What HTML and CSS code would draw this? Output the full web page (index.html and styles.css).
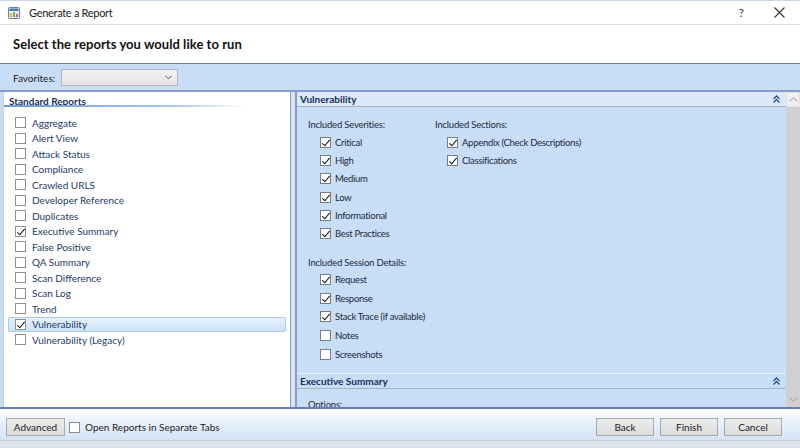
FILE: index.html
```html
<!DOCTYPE html>
<html>
<head>
<meta charset="utf-8">
<link rel="stylesheet" href="styles.css">
</head>
<body>
<div class="window">
  <div class="titlebar">
    <svg class="app-icon" width="12" height="12" viewBox="0 0 12 12">
      <rect x="0.5" y="0.5" width="11" height="11" rx="1" fill="#e8eef4" stroke="#6b7f95"/>
      <rect x="1.5" y="1.5" width="9" height="2.5" fill="#4a78b0"/>
      <rect x="2" y="6" width="2" height="4" fill="#e2b23c"/>
      <rect x="5" y="5" width="2" height="5" fill="#6fb04a"/>
      <rect x="8" y="7" width="2" height="3" fill="#d05b8c"/>
    </svg>
    <span class="title">Generate a Report</span>
    <span class="tb-help">?</span>
    <svg class="tb-close" width="11" height="11" viewBox="0 0 11 11"><path d="M0.5 0.5 L10.5 10.5 M10.5 0.5 L0.5 10.5" stroke="#333" stroke-width="1.1"/></svg>
  </div>
  <div class="header">Select the reports you would like to run</div>
  <div class="favbar">
    <span class="fav-label">Favorites:</span>
    <div class="select"><svg width="7" height="5" viewBox="0 0 7 5"><path d="M0.5 0.8 L3.5 3.8 L6.5 0.8" fill="none" stroke="#555" stroke-width="1"/></svg></div>
  </div>
  <div class="main">
    <div class="left">
      <div class="left-head">Standard Reports</div>
      <ul class="report-list">
        <li><span class="cb"></span>Aggregate</li>
        <li><span class="cb"></span>Alert View</li>
        <li><span class="cb"></span>Attack Status</li>
        <li><span class="cb"></span>Compliance</li>
        <li><span class="cb"></span>Crawled URLS</li>
        <li><span class="cb"></span>Developer Reference</li>
        <li><span class="cb"></span>Duplicates</li>
        <li><span class="cb on"></span>Executive Summary</li>
        <li><span class="cb"></span>False Positive</li>
        <li><span class="cb"></span>QA Summary</li>
        <li><span class="cb"></span>Scan Difference</li>
        <li><span class="cb"></span>Scan Log</li>
        <li><span class="cb"></span>Trend</li>
        <li class="sel"><span class="cb on"></span>Vulnerability</li>
        <li><span class="cb"></span>Vulnerability (Legacy)</li>
      </ul>
    </div>
    <div class="splitter"></div>
    <div class="right">
      <div class="right-scroll">
        <div class="sec-head">Vulnerability<svg class="collapse" width="7" height="8" viewBox="0 0 7 8"><path d="M0.5 4 L3.5 1 L6.5 4 M0.5 7.5 L3.5 4.5 L6.5 7.5" fill="none" stroke="#2a4f86" stroke-width="1.3"/></svg></div>
        <div class="sec-body">
          <div class="cols">
            <div class="col col1">
              <div class="grp-label">Included Severities:</div>
              <div class="opt"><span class="cb2 on"></span>Critical</div>
              <div class="opt"><span class="cb2 on"></span>High</div>
              <div class="opt"><span class="cb2 on"></span>Medium</div>
              <div class="opt"><span class="cb2 on"></span>Low</div>
              <div class="opt"><span class="cb2 on"></span>Informational</div>
              <div class="opt"><span class="cb2 on"></span>Best Practices</div>
            </div>
            <div class="col">
              <div class="grp-label">Included Sections:</div>
              <div class="opt"><span class="cb2 on"></span>Appendix (Check Descriptions)</div>
              <div class="opt"><span class="cb2 on"></span>Classifications</div>
            </div>
          </div>
          <div class="grp-label grp2">Included Session Details:</div>
          <div class="opt"><span class="cb2 on"></span>Request</div>
          <div class="opt"><span class="cb2 on"></span>Response</div>
          <div class="opt"><span class="cb2 on"></span>Stack Trace (if available)</div>
          <div class="opt tall"><span class="cb2"></span>Notes</div>
          <div class="opt tall"><span class="cb2"></span>Screenshots</div>
        </div>
        <div class="sec-head sec2">Executive Summary<svg class="collapse" width="7" height="8" viewBox="0 0 7 8"><path d="M0.5 4 L3.5 1 L6.5 4 M0.5 7.5 L3.5 4.5 L6.5 7.5" fill="none" stroke="#2a4f86" stroke-width="1.3"/></svg></div>
        <div class="sec-body2"><div class="grp-label">Options:</div></div>
      </div>
      <div class="vscroll">
        <div class="sb-btn"><svg width="9" height="5" viewBox="0 0 9 5"><path d="M0.5 4.5 L4.5 0.8 L8.5 4.5" fill="none" stroke="#9a9a9a" stroke-width="1"/></svg></div>
        <div class="sb-track"></div>
        <div class="sb-btn down"><svg width="9" height="5" viewBox="0 0 9 5"><path d="M0.5 0.5 L4.5 4.2 L8.5 0.5" fill="none" stroke="#9a9a9a" stroke-width="1"/></svg></div>
      </div>
    </div>
  </div>
  <div class="footer">
    <button class="btn adv">Advanced</button>
    <span class="cb foot-cb"></span>
    <span class="foot-label">Open Reports in Separate Tabs</span>
    <span class="spacer"></span>
    <button class="btn">Back</button>
    <button class="btn">Finish</button>
    <button class="btn">Cancel</button>
  </div>
  <div class="statusbar"></div>
</div>
</body>
</html>
```
FILE: styles.css
```css
* { box-sizing: border-box; }
html, body { margin: 0; padding: 0; }
body {
  width: 800px; height: 448px; overflow: hidden;
  font-family: Lato, "Noto Sans", sans-serif;
  background: #fff;
}
.window { width: 800px; height: 448px; display: flex; flex-direction: column; }

.titlebar {
  height: 25px; flex: none; display: flex; align-items: center;
  padding-left: 8px; border-bottom: 1px solid #dcdcdc; background: #fff;
  border-top: 1px solid #c9d6e6;
}
.app-icon { flex: none; }
.title { margin-left: 9px; font-size: 11px; color: #222; letter-spacing: -0.3px; }
.tb-help { margin-left: auto; font-size: 11.5px; color: #333; margin-right: 30px; }
.tb-close { margin-right: 15px; }

.header {
  height: 39px; flex: none; padding: 11px 0 0 13px;
  font-size: 13px; font-weight: 700; color: #111; letter-spacing: 0.05px;
  border-bottom: 1px solid #6d7ea6; background: #fff;
}

.favbar {
  height: 28px; flex: none; background: #c8ddf6; display: flex; align-items: center;
  padding-left: 13px; border-bottom: 2px solid #8a9acb; padding-top: 1px;
}
.fav-label { font-size: 10px; color: #222; }
.select {
  margin-left: 6px; width: 117px; height: 17px; border: 1px solid #b5b5b5;
  background: linear-gradient(#f2f2f2, #e4e4e4); display: flex; align-items: center;
  justify-content: flex-end; padding-right: 5px;
}

.main { height: 315px; flex: none; display: flex; padding-left: 3px; background: #c8ddf6; overflow: hidden; }

.left {
  width: 288px; flex: none; background: #fff; border-right: 1px solid #8f9bb3;
  border-left: 1px solid #c6cfdc; overflow: hidden;
}
.left-head {
  font-size: 10px; font-weight: 700; color: #15305b; padding: 3px 0 0 5px;
  position: relative; height: 14px; line-height: 12px;
}
.left-head::after {
  content: ""; position: absolute; left: 0; bottom: -1px; width: 240px; height: 2px;
  background: linear-gradient(to right, #6e98d8, #a9c4ec 70%, rgba(255,255,255,0));
}
.report-list { list-style: none; margin: 9px 0 0; padding: 0 4px 0 4px; }
.report-list li {
  height: 15.5px; display: flex; align-items: center; font-size: 10px; color: #233a6a;
  padding-left: 6px; border: 1px solid transparent; border-radius: 2px;
}
.report-list li.sel {
  background: linear-gradient(#e6f1fc, #cde3f8); border-color: #a8cbef;
}
.cb {
  width: 11px; height: 11px; border: 1px solid #8e8f8f; background: #fff; flex: none;
  margin-right: 6px; position: relative;
}
.cb.on::after, .cb2.on::after {
  content: ""; position: absolute; left: 3px; top: 0px; width: 3px; height: 7px;
  border: solid #111; border-width: 0 1.6px 1.6px 0; transform: rotate(40deg);
}

.splitter {
  width: 6px; flex: none; background: #d9e3ef; border-right: 2px solid #8a9acb;
}

.right { flex: 1; display: flex; min-width: 0; background: #c8ddf6; }
.right-scroll { flex: 1; overflow: hidden; }
.sec-head {
  height: 15px; background: #dce9fb; border-bottom: 1px solid #a8b3c2;
  font-size: 10px; font-weight: 700; color: #15305b; padding-left: 3px;
  display: flex; align-items: center; position: relative;
}
.sec-head .collapse { margin-left: auto; margin-right: 6px; }
.sec2 { border-top: 1px solid #eaf2fd; margin-top: 8px; background: #c8ddf6; height: 16px; }
.sec-body { padding: 11px 0 0 11px; }
.cols { display: flex; }
.col1 { width: 127px; }
.grp-label { font-size: 9.5px; color: #1c2a3a; height: 14px; line-height: 14px; margin-bottom: 1px; letter-spacing: -0.2px; }
.grp2 { margin-top: 13px; }
.opt {
  height: 18.3px; display: flex; align-items: center; font-size: 9.5px; color: #1c2a3a;
  padding-left: 12px; letter-spacing: -0.3px;
}
.opt.tall { height: 19.5px; }
.cb2 {
  width: 11px; height: 11px; border: 1px solid #7c7c7c; background: #fff; flex: none;
  margin-right: 4px; position: relative;
}
.sec-body2 { padding: 9px 0 0 11px; }

.vscroll {
  width: 14px; flex: none; background: #d0d0d0; display: flex; flex-direction: column;
}
.sb-btn { height: 15px; background: #f0f0f0; display: flex; align-items: center; justify-content: center; border: 1px solid #e0e0e0; }
.sb-btn.down { background: #d0d0d0; border: none; }
.sb-track { flex: 1; }

.footer {
  height: 33px; flex: none; display: flex; align-items: center;
  background: linear-gradient(#fbfdff, #d2e3f7);
  border-top: 2px solid #6b7cb2; padding: 5px 18px 0 6px;
}
.btn {
  height: 18px; font-family: Lato, "Noto Sans", sans-serif; font-size: 10px; color: #222;
  background: linear-gradient(#ececec, #dcdcdc); border: 1px solid #a9a9a9; border-radius: 0;
  padding: 0; width: 58px; line-height: 15px;
}
.btn + .btn { margin-left: 6px; }
.btn.adv { width: 59px; }
.foot-cb { margin-left: 4px; margin-right: 5px; }
.foot-label { font-size: 10px; color: #222; }
.spacer { flex: 1; }

.statusbar { flex: 1; background: #dbe2ea; border-top: 1px solid #c4cedb; }
```
